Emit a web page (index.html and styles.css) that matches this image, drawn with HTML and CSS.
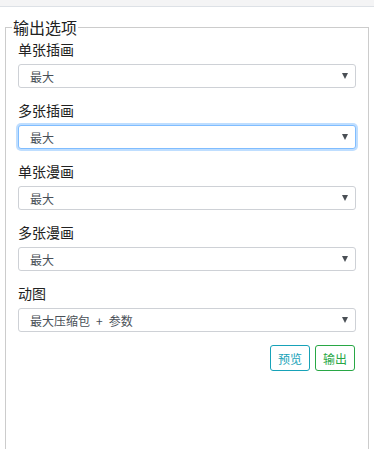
FILE: index.html
```html
<!DOCTYPE html>
<html lang="zh-CN">
<head>
    <meta charset="UTF-8"/>
    <meta content="width=device-width, initial-scale=1.0" name="viewport"/>
    <title>输出选项</title>
    <link rel="stylesheet" href="styles.css">
</head>
<body>
<div class="top-bar"></div>

<fieldset class="output-options">
    <legend class="options-legend">输出选项</legend>

    <div class="option-group">
        <label class="option-label">单张插画</label>
        <span class="select-wrap">
            <select class="option-select">
                <option>最大</option>
            </select>
        </span>
    </div>

    <div class="option-group">
        <label class="option-label">多张插画</label>
        <span class="select-wrap">
            <select class="option-select is-focus">
                <option>最大</option>
            </select>
        </span>
    </div>

    <div class="option-group">
        <label class="option-label">单张漫画</label>
        <span class="select-wrap">
            <select class="option-select">
                <option>最大</option>
            </select>
        </span>
    </div>

    <div class="option-group">
        <label class="option-label">多张漫画</label>
        <span class="select-wrap">
            <select class="option-select">
                <option>最大</option>
            </select>
        </span>
    </div>

    <div class="option-group">
        <label class="option-label">动图</label>
        <span class="select-wrap">
            <select class="option-select">
                <option>最大压缩包&#8194;+&#8194;参数</option>
            </select>
        </span>
    </div>

    <div class="option-buttons">
        <button class="btn btn-preview">预览</button>
        <button class="btn btn-output">输出</button>
    </div>
</fieldset>
</body>
</html>
```

FILE: styles.css
```css
/* Base styles */
body {
    margin: 0;
    padding: 0;
    font-family: "Noto Sans CJK SC", "Noto Sans", sans-serif;
    background-color: #ffffff;
    color: #222;
    overflow: hidden;
    height: 449px;
}

/* Strip at the top of the panel */
.top-bar {
    height: 6px;
    background-color: #f4f4f5;
    border-bottom: 1px solid #dde1e6;
}

/* Options box */
.output-options {
    margin: 10px 5px 0 5px;
    padding: 3px 12px 0 12px;
    border: 1px solid #cccccc;
    height: 500px;
}

.options-legend {
    font-size: 16px;
    line-height: 20px;
    padding: 0 1px;
    margin-left: -6px;
    color: #222;
}

.option-group {
    display: flex;
    flex-direction: column;
    gap: 6px;
    margin-bottom: 13px;
}

.option-label {
    font-size: 14px;
    line-height: 18px;
    color: #222;
}

/* Select with the small arrow */
.select-wrap {
    position: relative;
    display: block;
}

.select-wrap::after {
    content: "";
    position: absolute;
    right: 8px;
    top: 9px;
    border-left: 3.5px solid transparent;
    border-right: 3.5px solid transparent;
    border-top: 6px solid #4a4f55;
    pointer-events: none;
}

.option-select {
    display: block;
    width: 100%;
    height: 24px;
    margin: 0;
    padding: 0 20px 0 11px;
    border: 1px solid #ced1d6;
    border-radius: 3px;
    background-color: #fff;
    font-family: "Noto Sans CJK SC", "Noto Sans", sans-serif;
    font-size: 12px;
    color: #495057;
    -webkit-appearance: none;
    appearance: none;
    outline: none;
}

.option-select.is-focus {
    border-color: #80bdff;
    box-shadow: 0 0 0 2px rgba(0, 123, 255, 0.25);
}

/* Buttons */
.option-buttons {
    display: flex;
    justify-content: flex-end;
    gap: 5px;
    margin-top: 2px;
    padding-right: 1px;
}

.btn {
    height: 26px;
    padding: 0 7px;
    background: #fff;
    border-radius: 3px;
    font-family: "Noto Sans CJK SC", "Noto Sans", sans-serif;
    font-size: 12px;
    cursor: pointer;
}

.btn-preview {
    border: 1px solid #17a2b8;
    color: #17a2b8;
}

.btn-output {
    border: 1px solid #28a745;
    color: #28a745;
}
```
